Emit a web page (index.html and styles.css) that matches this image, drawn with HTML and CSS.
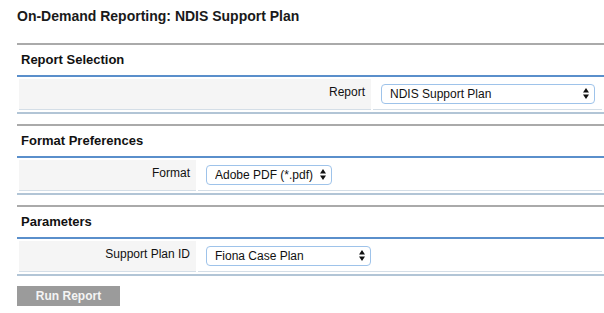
FILE: index.html
```html
<!DOCTYPE html>
<html>
<head>
<meta charset="utf-8">
<link rel="stylesheet" href="styles.css">
</head>
<body>
<div class="page">
  <h1 class="title">On-Demand Reporting: NDIS Support Plan</h1>

  <section class="section">
    <h2 class="section-head">Report Selection</h2>
    <table class="form-table">
      <tr>
        <td class="label label-wide">Report</td>
        <td class="value">
          <span class="select-wrap select-report">
            <select class="select"><option>NDIS Support Plan</option></select>
            <svg class="arrows" width="6" height="11" viewBox="0 0 6 11"><path d="M0 4.5 L3 0 L6 4.5 Z M0 6.5 L3 11 L6 6.5 Z" fill="#111"/></svg>
          </span>
        </td>
      </tr>
    </table>
  </section>

  <section class="section">
    <h2 class="section-head">Format Preferences</h2>
    <table class="form-table">
      <tr>
        <td class="label label-narrow">Format</td>
        <td class="value">
          <span class="select-wrap select-format">
            <select class="select"><option>Adobe PDF (*.pdf)</option></select>
            <svg class="arrows" width="6" height="11" viewBox="0 0 6 11"><path d="M0 4.5 L3 0 L6 4.5 Z M0 6.5 L3 11 L6 6.5 Z" fill="#111"/></svg>
          </span>
        </td>
      </tr>
    </table>
  </section>

  <section class="section">
    <h2 class="section-head">Parameters</h2>
    <table class="form-table">
      <tr>
        <td class="label label-narrow">Support Plan ID</td>
        <td class="value">
          <span class="select-wrap select-plan">
            <select class="select"><option>Fiona Case Plan</option></select>
            <svg class="arrows" width="6" height="11" viewBox="0 0 6 11"><path d="M0 4.5 L3 0 L6 4.5 Z M0 6.5 L3 11 L6 6.5 Z" fill="#111"/></svg>
          </span>
        </td>
      </tr>
    </table>
  </section>

  <button class="run-btn" type="button">Run Report</button>
</div>
</body>
</html>
```

FILE: styles.css
```css
html, body {
  margin: 0;
  padding: 0;
  background: #ffffff;
}

body {
  font-family: "Liberation Sans", Arial, Helvetica, sans-serif;
  color: #111;
}

.page {
  padding: 8px 0 0 17px;
  width: 587px;
}

.title {
  margin: 0 0 18px 0;
  font-size: 14px;
  line-height: 17px;
  font-weight: bold;
  color: #1a1a1a;
}

.section {
  border-top: 2px solid #aaaaaa;
  margin-bottom: 10px;
}

.section-head {
  margin: 0;
  padding: 0 0 0 4px;
  height: 30px;
  line-height: 30px;
  font-size: 13px;
  font-weight: bold;
  color: #111;
  border-bottom: 2px solid #5a8fcb;
}

.form-table {
  width: 100%;
  border-collapse: separate;
  border-spacing: 2px;
  border-bottom: 2px solid #b2c5d6;
}

.form-table td {
  height: 31px;
  padding: 0;
  border-bottom: 1px solid #d4dee7;
  box-sizing: border-box;
}

.label {
  background: #f5f5f5;
  text-align: right;
  vertical-align: top;
  font-size: 12px;
  line-height: 14px;
  padding: 6px 6px 0 0 !important;
  color: #111;
  white-space: nowrap;
}

.label-wide {
  width: 352px;
}

.label-narrow {
  width: 177px;
}

.value {
  vertical-align: middle;
  padding: 0 0 0 8px !important;
}

.select-wrap {
  position: relative;
  display: inline-block;
  vertical-align: middle;
}

.select {
  -webkit-appearance: none;
  appearance: none;
  display: block;
  box-sizing: border-box;
  height: 20px;
  margin: 0;
  padding: 0 0 0 8px;
  border: 1px solid #9ec3ea;
  border-radius: 4px;
  background: #ffffff;
  font-family: "Liberation Sans", Arial, Helvetica, sans-serif;
  font-size: 12px;
  color: #111;
}

.select-report .select { width: 214px; }
.select-format .select { width: 126px; }
.select-plan .select { width: 165px; }

.arrows {
  position: absolute;
  right: 6px;
  top: 4px;
  pointer-events: none;
}

.run-btn {
  display: block;
  width: 103px;
  height: 20px;
  margin: 0;
  padding: 0;
  border: none;
  background: #9b9b9b;
  color: #f4f4f4;
  font-family: "Liberation Sans", Arial, Helvetica, sans-serif;
  font-size: 12px;
  font-weight: bold;
}
```
